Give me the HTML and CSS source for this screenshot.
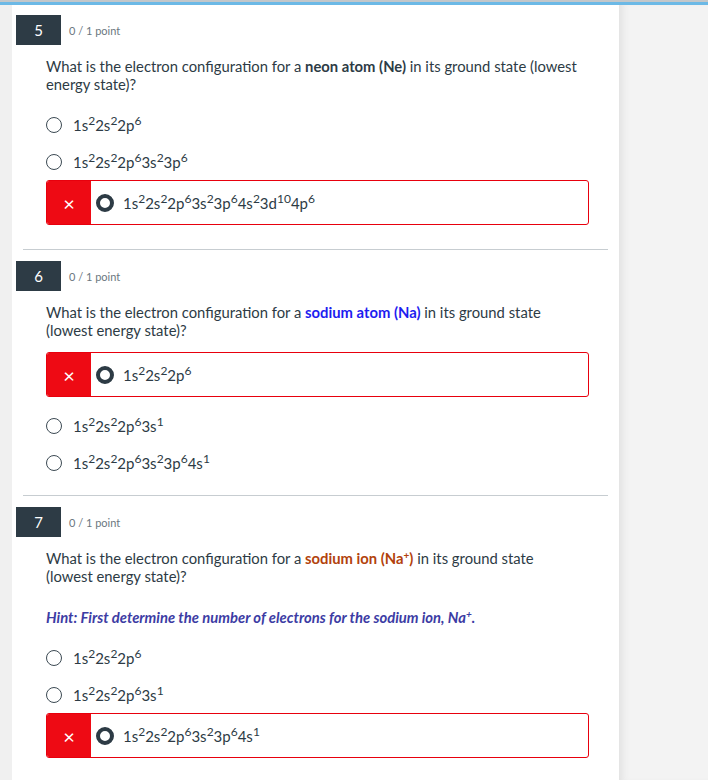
FILE: index.html
```html
<!DOCTYPE html>
<html lang="en">
<head>
<meta charset="utf-8">
<title>Quiz results</title>
<link rel="stylesheet" href="styles.css">
</head>
<body>
<div class="topbar"></div>
<div class="layout">
  <div class="gutter"></div>
  <main class="quiz">
    <section class="question first">
      <div class="q-head"><span class="badge">5</span><span class="points">0 / 1 point</span></div>
      <div class="q-body">
        <p class="q-text">What is the electron configuration for a <b>neon atom (Ne)</b> in its ground state (lowest energy state)?</p>
        <ul class="options">
          <li class="opt"><span class="radio"></span><span class="ans">1s<sup>2</sup>2s<sup>2</sup>2p<sup>6</sup></span></li>
          <li class="opt"><span class="radio"></span><span class="ans">1s<sup>2</sup>2s<sup>2</sup>2p<sup>6</sup>3s<sup>2</sup>3p<sup>6</sup></span></li>
          <li class="opt wrong"><span class="mark">×</span><span class="radio sel"></span><span class="ans">1s<sup>2</sup>2s<sup>2</sup>2p<sup>6</sup>3s<sup>2</sup>3p<sup>6</sup>4s<sup>2</sup>3d<sup>10</sup>4p<sup>6</sup></span></li>
        </ul>
      </div>
    </section>
    <hr class="sep">
    <section class="question">
      <div class="q-head"><span class="badge">6</span><span class="points">0 / 1 point</span></div>
      <div class="q-body">
        <p class="q-text">What is the electron configuration for a <b class="blue">sodium atom (Na)</b> in its ground state (lowest energy state)?</p>
        <ul class="options">
          <li class="opt wrong"><span class="mark">×</span><span class="radio sel"></span><span class="ans">1s<sup>2</sup>2s<sup>2</sup>2p<sup>6</sup></span></li>
          <li class="opt"><span class="radio"></span><span class="ans">1s<sup>2</sup>2s<sup>2</sup>2p<sup>6</sup>3s<sup>1</sup></span></li>
          <li class="opt"><span class="radio"></span><span class="ans">1s<sup>2</sup>2s<sup>2</sup>2p<sup>6</sup>3s<sup>2</sup>3p<sup>6</sup>4s<sup>1</sup></span></li>
        </ul>
      </div>
    </section>
    <hr class="sep">
    <section class="question">
      <div class="q-head"><span class="badge">7</span><span class="points">0 / 1 point</span></div>
      <div class="q-body">
        <p class="q-text">What is the electron configuration for a <b class="brown">sodium ion (Na<sup>+</sup>)</b> in its ground state (lowest energy state)?</p>
        <p class="hint">Hint: First determine the number of electrons for the sodium ion, Na<sup>+</sup>.</p>
        <ul class="options">
          <li class="opt"><span class="radio"></span><span class="ans">1s<sup>2</sup>2s<sup>2</sup>2p<sup>6</sup></span></li>
          <li class="opt"><span class="radio"></span><span class="ans">1s<sup>2</sup>2s<sup>2</sup>2p<sup>6</sup>3s<sup>1</sup></span></li>
          <li class="opt wrong"><span class="mark">×</span><span class="radio sel"></span><span class="ans">1s<sup>2</sup>2s<sup>2</sup>2p<sup>6</sup>3s<sup>2</sup>3p<sup>6</sup>4s<sup>1</sup></span></li>
        </ul>
      </div>
    </section>
  </main>
  <aside class="side"></aside>
</div>
</body>
</html>
```

FILE: styles.css
```css
* { box-sizing: border-box; }
html, body { margin: 0; padding: 0; }
body {
  font-family: Lato, "Open Sans", sans-serif;
  color: #2d3b45;
  background: #fff;
  width: 708px;
  height: 780px;
  overflow: hidden;
}
.topbar {
  height: 5px;
  border-top: 2px solid #c3c7ca;
  background: #6cb9e6;
}
.layout {
  display: flex;
  height: 775px;
}
.gutter {
  width: 12px;
  flex: none;
  background: #f0f0f0;
}
.quiz {
  width: 607px;
  flex: none;
  background: #fff;
}
.side {
  flex: 1;
  background: #f3f3f3;
  box-shadow: inset 8px 0 8px -6px #dcdcdc;
}
.question {
  padding: 11px 0 14px;
}
.question.first { padding-top: 10px; }
.q-head {
  display: flex;
  align-items: center;
  margin-left: 4px;
}
.badge {
  width: 45px;
  height: 30px;
  background: #2d3b45;
  color: #fff;
  font-size: 15px;
  display: flex;
  align-items: center;
  justify-content: center;
}
.points {
  margin-left: 8px;
  font-size: 11px;
  color: #6b7780;
}
.q-body {
  padding-left: 34px;
  width: 577px;
}
.q-text {
  margin: 12px 0 0;
  font-size: 14.8px;
  line-height: 18px;
  max-width: 535px;
}
.q-text b { font-weight: 700; }
.blue { color: #1d1df0; }
.brown { color: #b2420c; }
.hint {
  margin: 23px 0 0;
  font-size: 14.8px;
  line-height: 18px;
  font-style: italic;
  font-weight: 700;
  color: #3c3ca4;
}
sup {
  font-size: 10px;
  line-height: 0;
  vertical-align: 5px;
}
.options {
  list-style: none;
  margin: 13px 0 0;
  padding: 0;
}
.opt {
  display: flex;
  align-items: center;
  height: 37px;
  font-size: 15px;
}
.opt sup {
  font-size: 12px;
  vertical-align: 6px;
}
.radio {
  width: 16px;
  height: 16px;
  border-radius: 50%;
  border: 1.5px solid #3c4a53;
  flex: none;
}
.radio.sel {
  width: 18px;
  height: 18px;
  border: 4.5px solid #2d3b45;
}
.ans {
  margin-left: 11px;
  color: #2d3b45;
}
.opt.wrong {
  height: 45px;
  margin-bottom: 10px;
  border: 1px solid #e8000d;
  border-radius: 3px;
  overflow: hidden;
}
.mark {
  width: 44px;
  align-self: stretch;
  background: #ee0a14;
  color: #fff;
  font-size: 20px;
  display: flex;
  align-items: center;
  justify-content: center;
  margin-right: 5px;
}
.opt.wrong .ans { margin-left: 9px; }
.sep {
  margin: 0 11px;
  border: 0;
  border-top: 1px solid #c7cdd1;
  height: 0;
}
```
